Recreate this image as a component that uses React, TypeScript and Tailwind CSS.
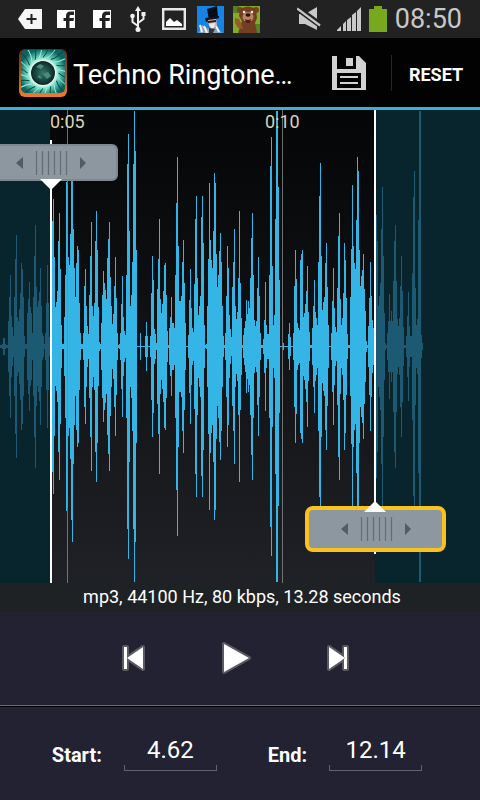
import { useState } from 'react';
import type { ReactNode } from 'react';

// Peak level of the track, one value per pixel column
const peaks: number[] = [
    2, 2, 3, 9, 9, 3, 2, 2, 26, 50, 72, 31, 20, 11, 50, 88, 112, 30, 26, 38,
    54, 84, 78, 50, 11, 3, 3, 34, 48, 65, 40, 34, 14, 50, 91, 122, 60, 40, 46, 55,
    79, 41, 14, 11, 3, 14, 44, 82, 44, 10, 48, 70, 126, 148, 90, 40, 45, 56, 106, 134,
    78, 22, 3, 3, 30, 72, 165, 162, 90, 82, 113, 174, 196, 118, 79, 50, 84, 101, 97, 44,
    14, 3, 3, 14, 61, 78, 41, 21, 13, 52, 91, 125, 41, 31, 44, 106, 136, 97, 40, 5,
    3, 24, 52, 76, 64, 57, 48, 89, 108, 125, 70, 41, 23, 33, 61, 90, 49, 14, 2, 3,
    14, 43, 71, 30, 16, 12, 72, 183, 213, 116, 41, 52, 85, 183, 236, 196, 97, 1, 1, 1,
    14, 1, 1, 1, 1, 11, 25, 11, 1, 1, 11, 54, 91, 67, 18, 13, 4, 58, 88, 128,
    48, 34, 43, 56, 82, 84, 52, 16, 2, 19, 30, 50, 24, 24, 19, 72, 144, 190, 101, 46,
    46, 51, 85, 107, 64, 24, 1, 1, 12, 47, 78, 39, 19, 15, 63, 128, 151, 69, 32, 41,
    51, 130, 151, 104, 22, 2, 3, 41, 88, 164, 107, 87, 79, 116, 174, 164, 93, 60, 72, 96,
    114, 85, 41, 11, 2, 14, 51, 101, 79, 32, 18, 10, 60, 85, 118, 41, 28, 35, 69, 136,
    64, 29, 2, 12, 19, 26, 47, 33, 46, 39, 69, 109, 134, 72, 27, 21, 26, 59, 90, 51,
    14, 2, 2, 8, 27, 65, 22, 13, 13, 72, 181, 210, 81, 22, 32, 128, 236, 236, 160, 67,
    1, 1, 1, 4, 1, 1, 1, 1, 13, 24, 10, 1, 1, 14, 61, 97, 68, 24, 19, 17,
    87, 93, 97, 30, 34, 43, 56, 81, 35, 15, 2, 2, 19, 41, 67, 35, 29, 22, 85, 151,
    184, 91, 37, 45, 50, 84, 104, 60, 22, 1, 1, 14, 46, 79, 39, 20, 15, 59, 111, 134,
    48, 22, 29, 54, 104, 87, 49, 13, 2, 2, 50, 98, 162, 101, 84, 78, 127, 190, 176, 97,
    61, 71, 77, 93, 58, 36, 6, 2, 21, 49, 85, 51, 27, 19, 19, 90, 132, 106, 41, 51,
    64, 118, 160, 91, 34, 4, 2, 14, 26, 53, 26, 36, 26, 66, 106, 122, 66, 28, 21, 29,
    61, 91, 56, 20, 2, 2, 11, 31, 55, 21, 11, 11, 74, 150, 176, 59, 22, 28, 127, 236,
    236, 12, 4,
];

const MIDDLE = 237;
const SELECTION_START = 50;
const SELECTION_END = 375;

// Builds the outline of the columns between two positions
const wavePath = (from: number, to: number) =>
    peaks
        .slice(from, to)
        .map((peak, i) => `M${from + i} ${MIDDLE - peak}h1v${peak * 2 - 1}h-1z`)
        .join('');

const NewMessageIcon = () => (
    <svg className="h-5 w-6" viewBox="0 0 24 20" aria-hidden="true">
        <path d="M0 10 7 0h17v20H7z" fill="#f5f5f5" />
        <path d="M13.500 5v10M8.500 10h10" stroke="#222" strokeWidth="2" />
    </svg>
);

const FacebookIcon = () => (
    <svg className="h-[18px] w-[18px]" viewBox="0 0 18 18" aria-hidden="true">
        <path d="M0 0h18v18H0z" fill="#fff" />
        <path d="M9 18v-7H6.500V8H9V6c0-3 1.500-4.500 4.500-4.500H17V5h-2.500C13 5 12.500 5.500 12.500 6.500V8H17l-.5 3h-4v7z" fill="#222" />
    </svg>
);

const UsbIcon = () => (
    <svg className="h-[26px] w-4" viewBox="0 0 16 26" aria-hidden="true">
        <path d="M8 4v20M8 20l-5.500-4v-5M8 17l5.500-4V9" fill="none" stroke="#f0f0f0" strokeWidth="2" />
        <path d="m8 0 3 5H5zM11.500 6h4v4h-4z" fill="#f0f0f0" />
        <circle cx="2.500" cy="10" r="2.300" fill="#f0f0f0" />
        <circle cx="8" cy="23.500" r="2.500" fill="#f0f0f0" />
    </svg>
);

const PictureIcon = () => (
    <svg className="h-[22px] w-6" viewBox="0 0 24 22" aria-hidden="true">
        <path d="M1.200 1.200h21.600v19.600H1.200z" fill="none" stroke="#e8e8e8" strokeWidth="2.400" />
        <path d="M4 18v-4l4-4 4 4 3-2 5 4v2z" fill="#fff" />
    </svg>
);

const TopHatAvatar = () => (
    <svg className="h-[27px] w-[27px]" viewBox="0 0 27 27" aria-hidden="true">
        <path d="M0 0h27v27H0z" fill="#1684e4" />
        <path d="m10 3 10-3 1 12-9 2z" fill="#080b12" />
        <path d="m8 12 14-2v2L9 16z" fill="#111722" />
        <path d="m11 14 8-1 1 6-4 4-4-3z" fill="#d8b7aa" />
        <path d="m11 15 8-1v2l-8 1z" fill="#221d22" />
        <path d="m12 18 6-1-1 5-3 1z" fill="#eceae6" />
        <path d="m2 27 3-8 5 3 4 1 6-2 5 6z" fill="#8aa3b8" />
        <path d="m7 20 3 7M19 20l3 6M3 19l2 7" stroke="#f3f3ef" strokeWidth="2" />
        <path d="m12 22 6 1-2 4h-4z" fill="#3b3236" />
    </svg>
);

const BearAvatar = () => (
    <svg className="h-[27px] w-[27px]" viewBox="0 0 27 27" aria-hidden="true">
        <path d="M0 0h27v27H0z" fill="#83ac22" />
        <path d="M0 0h6v7H0zM20 18h7v9h-7z" fill="#557f22" />
        <circle cx="7" cy="4" r="3" fill="#774321" />
        <circle cx="23" cy="4" r="3" fill="#774321" />
        <path d="M7 3q8-5 16 0l1 9-2 5 2 10H5l4-12-3-5z" fill="#743f20" />
        <path d="m2 12 4 1 2 4 2 6-5-1-3-5z" fill="#9a592d" />
        <ellipse cx="15" cy="11" rx="5.500" ry="5" fill="#b98261" />
        <circle cx="11" cy="6" r="1.300" fill="#f5eee4" />
        <circle cx="19" cy="6" r="1.300" fill="#f5eee4" />
        <ellipse cx="15" cy="9" rx="2.500" ry="1.800" fill="#211210" />
        <path d="M12 13q3 2 6 0l-1 4h-4z" fill="#541b19" />
    </svg>
);

const SystemIcons = () => (
    <>
        <svg className="h-6 w-6" viewBox="0 0 24 24" aria-hidden="true">
            <path d="M2 7h6l12-7v23L8 17H2z" fill="#c8c8c8" />
            <path d="m0 1 24 17.500" stroke="#222" strokeWidth="6" />
            <path d="m0 1.500 23 17" stroke="#c8c8c8" strokeWidth="2.200" />
        </svg>
        <svg className="ml-4 h-6 w-6" viewBox="0 0 24 24" aria-hidden="true">
            <path d="M0 24v-1l4-4v5zM6 24v-7l3-3v10zM10 24V13l4-3v14zM15 24V8l4-3v19zM20 24V4l4-4v24z" fill="#c8c8c8" />
        </svg>
        <svg className="ml-2 h-[26px] w-[18px]" viewBox="0 0 18 26" aria-hidden="true">
            <path d="M0 3h5V0h8v3h5v23H0z" fill="#78a81e" />
        </svg>
    </>
);

const swirls = Array.from({ length: 24 }, (_, i) => i * 15);

const AppLogo = () => (
    <svg className="h-12 w-12 shrink-0" viewBox="0 0 48 48" aria-hidden="true">
        <defs>
            <radialGradient id="glow">
                <stop offset="0.5" stopColor="#f0fffa" />
                <stop offset="0.7" stopColor="#5fcdb5" />
                <stop offset="1" stopColor="#0b6462" />
            </radialGradient>
            <linearGradient id="frame" x1="0" y1="0" x2="0" y2="1">
                <stop stopColor="#602d14" />
                <stop offset="1" stopColor="#f17b28" />
            </linearGradient>
            <radialGradient id="planet">
                <stop stopColor="#35796c" />
                <stop offset="1" stopColor="#0b2725" />
            </radialGradient>
            <clipPath id="tile">
                <rect x="2" y="1" width="44" height="43" rx="5" />
            </clipPath>
        </defs>
        <rect width="48" height="48" rx="6" fill="url(#frame)" />
        <g clipPath="url(#tile)">
            <path d="M0 0h48v48H0z" fill="url(#glow)" />
            {swirls.map((angle) => (
                <path
                    key={angle}
                    d="M28 9Q36 4 40-8"
                    fill="none"
                    stroke={angle % 30 ? '#064b4a' : '#9beeda'}
                    strokeWidth="1"
                    transform={`rotate(${angle} 24 24)`}
                />
            ))}
            <circle cx="24" cy="24" r="12" fill="url(#planet)" />
            <path d="m17 18 4-3 4 2-3 3zM24 25l5-2 3 4-4 3zM18 28l3-2 2 4z" fill="#4a8b7a" />
        </g>
    </svg>
);

const SaveIcon = () => (
    <svg className="h-[34px] w-[34px]" viewBox="0 0 34 34" aria-hidden="true">
        <path
            d="M0 0h5v13h19V0h3l7 7v27H0zM14 2h7v8h-7zM5 17v15h24V17z"
            fill="#d2d2d2"
            fillRule="evenodd"
        />
        <path d="M8 21h18M8 27h18" stroke="#d2d2d2" strokeWidth="2" />
    </svg>
);

// Grip drawn on both selection markers
const GripIcon = () => (
    <svg className="h-[26px] w-[70px]" viewBox="0 0 70 26" aria-hidden="true">
        <path d="m0 13 7-6v12zM70 13l-6-6v12z" fill="#505d66" />
        <path d="M20.500 1v24M26.500 1v24M32.500 1v24M38.500 1v24M44.500 1v24M50.500 1v24" stroke="#626e77" strokeWidth="1.200" />
    </svg>
);

interface PlayerButtonProps {
    label: string;
    children: ReactNode;
}

const PlayerButton = ({ label, children }: PlayerButtonProps) => (
    <button type="button" aria-label={label} className="flex h-12 w-[102px] items-center justify-center">
        <svg
            className="h-9 w-9"
            viewBox="0 0 36 36"
            fill="#fff"
            stroke="#5b5a63"
            strokeWidth="4"
            strokeLinejoin="round"
            aria-hidden="true"
        >
            {children}
            <g stroke="none">{children}</g>
        </svg>
    </button>
);

interface TimeFieldProps {
    id: string;
    label: string;
    value: string;
    onChange: (value: string) => void;
}

const TimeField = ({ id, label, value, onChange }: TimeFieldProps) => (
    <div className="flex items-center gap-[22px]">
        <label htmlFor={id} className="pt-2 text-xl font-bold">
            {label}
        </label>
        <div className="relative">
            <input
                id={id}
                value={value}
                onChange={(e) => onChange(e.target.value)}
                className="h-10 w-[93px] bg-transparent pb-[2px] text-center text-2xl outline-none"
            />
            <span className="pointer-events-none absolute inset-x-0 bottom-0 h-[6px] border border-t-0 border-[#62616e]" />
        </div>
    </div>
);

const App = () => {
    const [start, setStart] = useState('4.62');
    const [end, setEnd] = useState('12.14');

    return (
        <div className="flex min-h-screen flex-col bg-[#232232] font-[Roboto,sans-serif] text-white">
            {/* Status bar */}
            <div className="flex h-[38px] items-center justify-between bg-[#222222] pr-[18px] pl-[18px]">
                <div className="flex items-center">
                    <div className="flex items-center gap-[15px]">
                        <NewMessageIcon />
                        <FacebookIcon />
                        <span className="pl-[3px]">
                            <FacebookIcon />
                        </span>
                    </div>
                    <div className="ml-[19px] flex items-center gap-4">
                        <UsbIcon />
                        <PictureIcon />
                    </div>
                    <div className="ml-[11px] flex items-center gap-[9px]">
                        <TopHatAvatar />
                        <BearAvatar />
                    </div>
                </div>
                <div className="flex items-center">
                    <SystemIcons />
                    <span className="ml-2 text-[27px] leading-8 text-[#c8c8c8]">08:50</span>
                </div>
            </div>

            {/* Title bar */}
            <header className="flex h-[72px] items-center border-b-[3px] border-[#39b0dc] bg-[#020202] pl-[19px]">
                <AppLogo />
                <h1 className="ml-[6px] min-w-0 flex-1 truncate pt-1 text-[27px] leading-9">Techno Ringtone…</h1>
                <button type="button" aria-label="Save" className="flex h-12 w-[84px] items-center justify-center">
                    <SaveIcon />
                </button>
                <button type="button" className="h-9 w-[89px] border-l border-[#262626] pt-1 text-lg font-bold">
                    RESET
                </button>
            </header>

            {/* Waveform */}
            <main className="relative h-[473px] overflow-hidden bg-linear-to-b from-[#050607] to-[#202126]">
                <div className="absolute inset-y-0 left-0 w-[50px] bg-[#08242d]" />
                <div className="absolute inset-y-0 right-0 left-[375px] bg-[#08242d]" />
                <svg className="relative block h-[473px] w-[480px]" viewBox="0 0 480 473" shapeRendering="crispEdges" aria-hidden="true">
                    <path d={wavePath(0, SELECTION_START)} fill="#1b5a72" />
                    <path d={wavePath(SELECTION_START, SELECTION_END)} fill="#35b5e5" />
                    <path d={wavePath(SELECTION_END, peaks.length)} fill="#1b5a72" />
                    <path d="M67 0h1v473h-1zM282 0h1v473h-1z" fill="#888" fillOpacity="0.8" />
                    <path d="M50 30h2v443h-2zM374 0h2v444h-2z" fill="#fff" />
                </svg>
                <span className="absolute top-0 left-[50px] text-lg leading-6 text-[#d8d4b8]">0:05</span>
                <span className="absolute top-0 left-[265px] text-lg leading-6 text-[#d8d4b8]">0:10</span>

                {/* Start marker */}
                <button
                    type="button"
                    aria-label="Start marker"
                    className="absolute top-[34px] -left-[17px] flex h-[37px] w-[135px] items-center justify-center rounded-md border-2 border-[#7d8991] bg-[#8c979f]"
                >
                    <GripIcon />
                    <svg className="absolute top-full left-[55px] h-[11px] w-[22px]" viewBox="0 0 22 11" aria-hidden="true">
                        <path d="M0 0h22L11 11z" fill="#fff" />
                    </svg>
                </button>

                {/* End marker, focused */}
                <button
                    type="button"
                    aria-label="End marker"
                    className="absolute top-[396px] left-[305px] flex h-[46px] w-[141px] items-center justify-center rounded-lg border-4 border-[#fbc21f] bg-[#8c979f]"
                >
                    <GripIcon />
                    <svg className="absolute -top-[9px] left-[55px] h-[11px] w-[22px]" viewBox="0 0 22 11" aria-hidden="true">
                        <path d="M0 11h22L11 0z" fill="#fff" />
                    </svg>
                </button>
            </main>

            <p className="h-[29px] bg-[#1f2225] pl-1 text-center text-lg leading-7">mp3, 44100 Hz, 80 kbps, 13.28 seconds</p>

            {/* Playback controls */}
            <div className="flex h-[94px] items-center justify-center border-b border-[#68677a] pr-2 pb-[2px]">
                <PlayerButton label="Previous">
                    <path d="M8 7h3v22H8zM27 7v22L11 18z" />
                </PlayerButton>
                <PlayerButton label="Play">
                    <path d="M6 4v28l25-14z" />
                </PlayerButton>
                <PlayerButton label="Next">
                    <path d="M9 7v22l16-11zM24 7h3v22h-3z" />
                </PlayerButton>
            </div>

            {/* Selection times */}
            <div className="flex flex-1 items-center justify-center gap-[51px] border-t border-black pr-[6px] pb-[6px]">
                <TimeField id="start" label="Start:" value={start} onChange={setStart} />
                <TimeField id="end" label="End:" value={end} onChange={setEnd} />
            </div>
        </div>
    );
};

export default App;
